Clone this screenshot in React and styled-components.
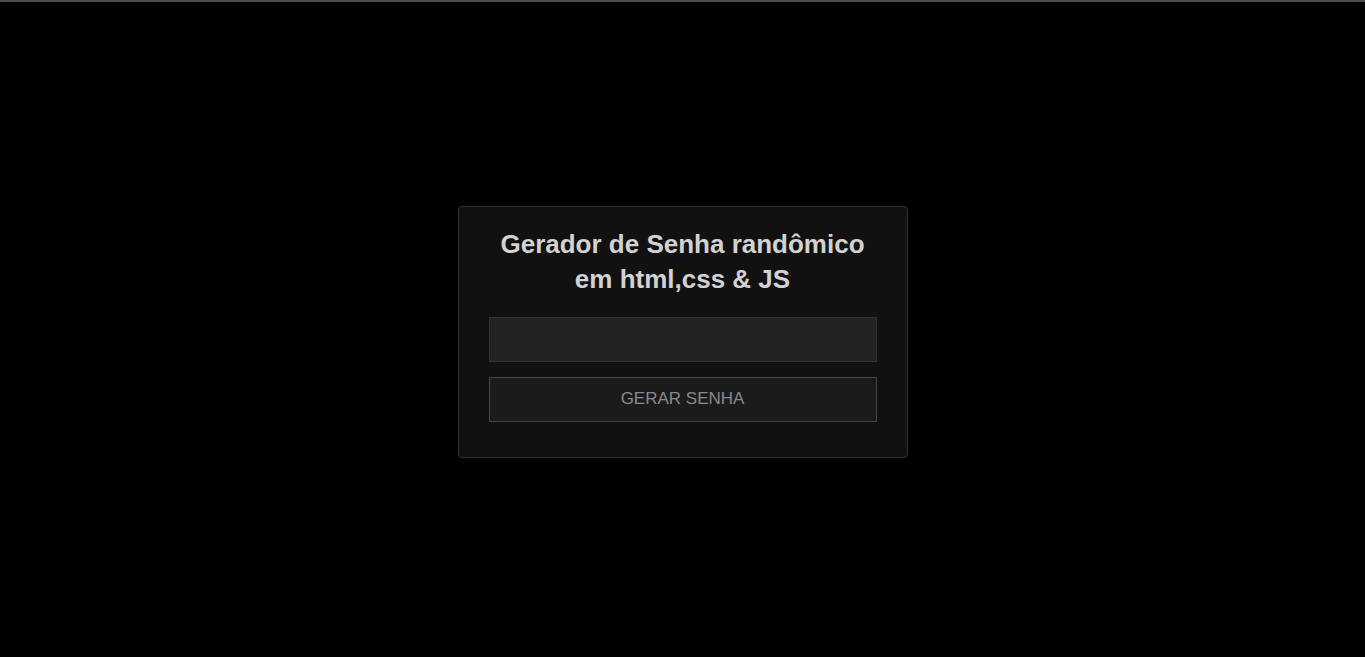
import React from 'react'
import styled, {createGlobalStyle} from 'styled-components'

// -------------------------------------------------------------
// Global.
// -------------------------------------------------------------

const GlobalStyle = createGlobalStyle`
  * {
    box-sizing: border-box;
  }

  html, body {
    margin: 0;
    padding: 0;
    background: #000;
    font-family: "Liberation Sans", Arial, sans-serif;
  }
`

// -------------------------------------------------------------
// Layout.
// -------------------------------------------------------------

const Page = styled.main`
  display: flex;
  align-items: center;
  justify-content: center;

  height: 657px;
  padding-top: 5px;

  border-top: 2px solid #4d4d4d;
  background: #000;
`

const Card = styled.section`
  width: 450px;
  padding: 20px 30px;

  background: #111;
  border: 1px solid #333;
  border-radius: 4px;
`

const Title = styled.h2`
  margin: 0 0 20px;

  color: #d2d2d2;
  font-size: 26px;
  font-weight: bold;
  line-height: 35px;
  text-align: center;
`

// -------------------------------------------------------------
// Controls.
// -------------------------------------------------------------

const PasswordField = styled.input`
  display: block;
  width: 100%;
  height: 45px;
  margin: 0;
  padding: 0 10px;

  color: #ccc;
  background: #222;
  border: 1px solid #333;
  outline: none;

  font-family: inherit;
  font-size: 17px;
`

const GenerateButton = styled.button`
  display: block;
  width: 100%;
  height: 45px;
  margin: 15px 0;
  padding: 0 0 2px;

  color: #8a8a8a;
  background: #1b1b1b;
  border: 1px solid #444;
  cursor: pointer;

  font-family: inherit;
  font-size: 17px;
  text-transform: uppercase;
`

// -------------------------------------------------------------
// Export.
// -------------------------------------------------------------

export default function App() {
  return (
    <>
      <GlobalStyle />
      <Page>
        <Card>
          <Title>
            Gerador de Senha randômico
            <br />
            em html,css &amp; JS
          </Title>
          <PasswordField type="text" readOnly />
          <GenerateButton>Gerar senha</GenerateButton>
        </Card>
      </Page>
    </>
  )
}
